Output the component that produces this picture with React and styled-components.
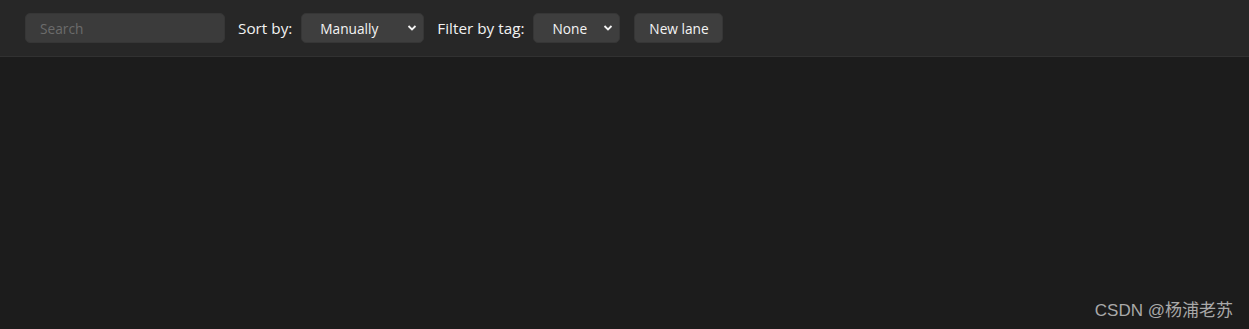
import React, { useState } from "react";
import styled, { createGlobalStyle } from "styled-components";

const GlobalStyle = createGlobalStyle`
  html, body {
    margin: 0;
    padding: 0;
    background: #1c1c1c;
    font-family: "Open Sans", "Noto Sans", Arial, sans-serif;
  }
`;

const Page = styled.div`
  height: 329px;
  background: #1c1c1c;
  display: flex;
  flex-direction: column;
`;

const Toolbar = styled.div`
  height: 57px;
  box-sizing: border-box;
  background: #272727;
  border-bottom: 1px solid #313131;
  display: flex;
  align-items: center;
  padding: 0 25px;
`;

const SearchInput = styled.input`
  box-sizing: border-box;
  width: 200px;
  height: 30px;
  padding: 0 14px;
  background: #3b3b3b;
  border: 1px solid #363636;
  border-radius: 5px;
  color: #ddd;
  font-family: inherit;
  font-size: 13.7px;
  outline: none;

  &::placeholder {
    color: #6b6b6b;
  }
`;

const Label = styled.span`
  color: #f2f2f2;
  font-size: 15.3px;
  margin-left: 13px;
  margin-right: 9px;
`;

const SelectWrap = styled.div`
  position: relative;
  width: ${(p) => p.$width}px;
  height: 30px;
`;

const Select = styled.select`
  appearance: none;
  box-sizing: border-box;
  width: 100%;
  height: 100%;
  padding: 0 0 0 ${(p) => p.$pad}px;
  background: #3e3e3e;
  border: 1px solid #363636;
  border-radius: 5px;
  color: #f4f4f4;
  font-family: inherit;
  font-size: 13.7px;
  outline: none;
`;

const Chevron = styled.svg`
  position: absolute;
  right: 7px;
  top: 11px;
  pointer-events: none;
`;

const Button = styled.button`
  box-sizing: border-box;
  height: 30px;
  width: 89px;
  margin-left: 14px;
  background: #3e3e3e;
  border: 1px solid #363636;
  border-radius: 5px;
  color: #f4f4f4;
  font-family: inherit;
  font-size: 13.7px;
`;

const Body = styled.div`
  flex: 1;
  display: flex;
  align-items: flex-end;
  justify-content: flex-end;
  padding: 0 16px 8px 0;
`;

const Watermark = styled.span`
  color: #a9a9a9;
  font-size: 17px;
  font-family: "Liberation Sans", "Noto Sans CJK SC", sans-serif;
`;

function Dropdown({ width, pad, options, value, onChange }) {
  return (
    <SelectWrap $width={width}>
      <Select $pad={pad} value={value} onChange={(e) => onChange(e.target.value)}>
        {options.map((o) => (
          <option key={o}>{o}</option>
        ))}
      </Select>
      <Chevron width="10" height="8" viewBox="0 0 10 8">
        <path d="M1.5 2 L5 5.5 L8.5 2" fill="none" stroke="#f4f4f4" strokeWidth="1.8" />
      </Chevron>
    </SelectWrap>
  );
}

export default function App() {
  const [search, setSearch] = useState("");
  const [sort, setSort] = useState("Manually");
  const [tag, setTag] = useState("None");

  return (
    <Page>
      <GlobalStyle />
      <Toolbar>
        <SearchInput
          type="text"
          placeholder="Search"
          value={search}
          onChange={(e) => setSearch(e.target.value)}
        />
        <Label>Sort by:</Label>
        <Dropdown
          width={123}
          pad={18}
          options={["Manually", "Title", "Date"]}
          value={sort}
          onChange={setSort}
        />
        <Label>Filter by tag:</Label>
        <Dropdown width={87} pad={18} options={["None"]} value={tag} onChange={setTag} />
        <Button>New lane</Button>
      </Toolbar>
      <Body>
        <Watermark>CSDN @杨浦老苏</Watermark>
      </Body>
    </Page>
  );
}
